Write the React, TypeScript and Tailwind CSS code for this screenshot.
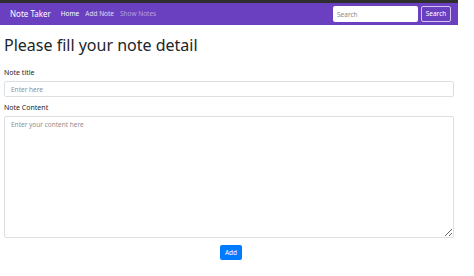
import React from 'react';

const font = { fontFamily: '"Noto Sans", "Open Sans", sans-serif' };

export default function App() {
    return (
        <div className="w-[474px] h-[276px] bg-white overflow-hidden" style={font}>
            <div className="w-[458px]">
                <div className="h-[3px] bg-[#2f2f2f]" />
                <nav className="h-[22px] bg-[#6a3fc0] flex items-center pl-[10px] pr-[7px]">
                    <span className="text-[8px] leading-none text-white mr-[10px]">Note Taker</span>
                    <div className="flex gap-[6px] text-[6.5px] leading-none">
                        <span className="text-white">Home</span>
                        <span className="text-white/80">Add Note</span>
                        <span className="text-white/50">Show Notes</span>
                    </div>
                    <div className="ml-auto flex gap-[3px]">
                        <input
                            className="w-[85px] h-[16px] bg-white rounded-[2px] px-[4px] text-[6.5px] outline-none placeholder:text-[#8a8a8a]"
                            placeholder="Search"
                        />
                        <button className="h-[16px] w-[30px] border border-white/70 rounded-[2px] text-white text-[6.5px]">
                            Search
                        </button>
                    </div>
                </nav>
                <div className="px-[4px]">
                    <h1 className="text-[16px] text-[#212529] mt-[9px] leading-[22px]">Please fill your note detail</h1>
                    <label className="block text-[7px] leading-[9px] text-[#212529] mt-[12px]">Note title</label>
                    <input
                        className="block mt-[4px] w-full h-[16px] border border-[#dcdfe3] rounded-[2px] px-[6px] text-[6.5px] outline-none placeholder:text-[#8a8f95]"
                        placeholder="Enter here"
                    />
                    <label className="block text-[7px] leading-[9px] text-[#212529] mt-[6px]">Note Content</label>
                    <textarea
                        className="block mt-[4px] w-full h-[122px] border border-[#dcdfe3] rounded-[2px] px-[6px] py-[3px] text-[6.5px] outline-none placeholder:text-[#8a8f95]"
                        placeholder="Enter your content here"
                    />
                    <div className="flex justify-center mt-[7px] pl-[4px]">
                        <button className="h-[15px] w-[22px] bg-[#007bff] rounded-[2px] text-white text-[6.5px]">
                            Add
                        </button>
                    </div>
                </div>
            </div>
        </div>
    );
}
